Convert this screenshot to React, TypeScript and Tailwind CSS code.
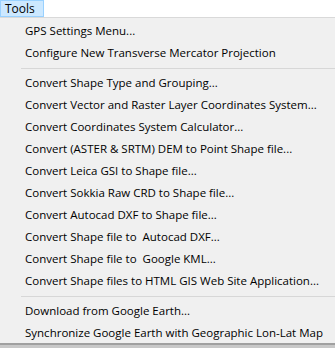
import React from 'react';

type Entry = { label: string } | { sep: true };

const items: Entry[] = [
  { label: 'GPS Settings Menu...' },
  { label: 'Configure New Transverse Mercator Projection' },
  { sep: true },
  { label: 'Convert Shape Type and Grouping...' },
  { label: 'Convert Vector and Raster Layer Coordinates System...' },
  { label: 'Convert Coordinates System Calculator...' },
  { label: 'Convert (ASTER & SRTM) DEM to Point Shape file...' },
  { label: 'Convert Leica GSI to Shape file...' },
  { label: 'Convert Sokkia Raw CRD to Shape file...' },
  { label: 'Convert Autocad DXF to Shape file...' },
  { label: 'Convert Shape file to  Autocad DXF...' },
  { label: 'Convert Shape file to  Google KML...' },
  { label: 'Convert Shape files to HTML GIS Web Site Application...' },
  { sep: true },
  { label: 'Download from Google Earth...' },
  { label: 'Synchronize Google Earth with Geographic Lon-Lat Map' },
];

const App = () => {
  return (
    <div className="w-[335px] h-[348px] overflow-hidden bg-[#f0f0f0] text-black font-['Open_Sans',sans-serif] text-[11.5px]">
      <div className="h-[18px] bg-white border-b border-[#d9d9d9] flex">
        <div className="w-[44px] h-[17px] bg-[#cce8ff] border border-[#99d1ff] flex items-center pl-[4px] leading-none text-[12px]">
          Tools
        </div>
      </div>
      <div className="pt-[2px] h-[325px]">
        {items.map((it, i) =>
          'sep' in it ? (
            <div key={i} className="h-[8px] flex items-center pl-[21px]">
              <div className="h-px w-full bg-[#d7d7d7]" />
            </div>
          ) : (
            <div
              key={i}
              className="h-[22px] flex items-center pl-[25px] whitespace-pre leading-none"
            >
              {it.label}
            </div>
          ),
        )}
      </div>
      <div className="h-[2px] bg-[#a0a0a0]" />
      <div className="h-[3px] bg-[#c8c8c8]" />
    </div>
  );
};

export default App;
